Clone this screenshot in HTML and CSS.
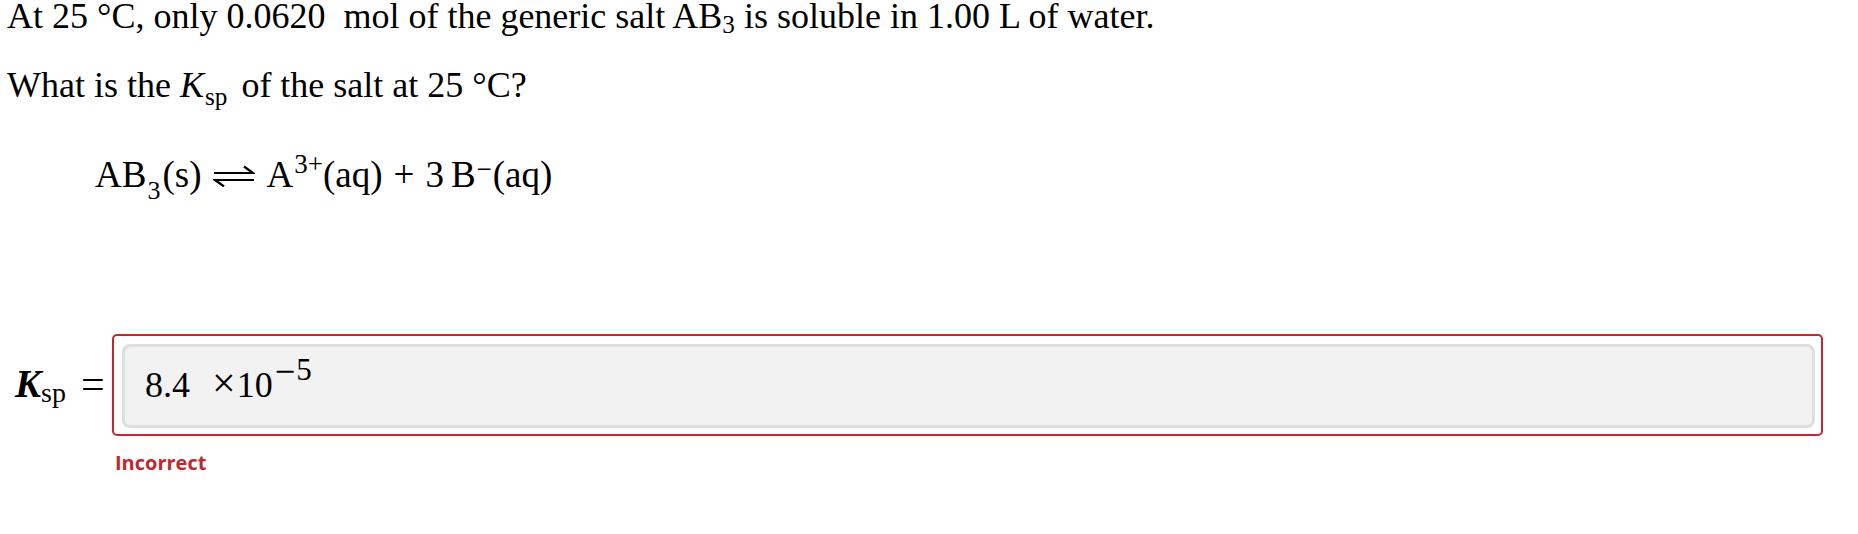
FILE: index.html
```html
<!DOCTYPE html>
<html>
<head>
<meta charset="utf-8">
<link rel="stylesheet" href="styles.css">
</head>
<body>
<div class="page">
  <p class="q q1">At 25 °C, only 0.0620&nbsp; mol of the generic salt AB<sub class="sub">3</sub> is soluble in 1.00 L of water.</p>
  <p class="q q2">What is the <i class="kvar">K</i><sub class="sub sp">sp</sub> of the salt at 25 °C?</p>
  <div class="eq"><span>AB</span><sub class="esub">3</sub><span class="paren-s">(s)</span><svg class="arrow" width="42" height="22" viewBox="0 0 42 22"><path d="M1 8 H40 L31 1.5" fill="none" stroke="#000" stroke-width="2.2"/><path d="M41 15 H2 L11 21.5" fill="none" stroke="#000" stroke-width="2.2"/></svg><span>A</span><sup class="esup">3+</sup><span>(aq)</span><span class="op">+</span><span>3</span><span class="thin"></span><span>B</span><sup class="esup minus">−</sup><span>(aq)</span></div>
  <div class="answer-row">
    <div class="label"><b class="kb">K</b><sub class="lsub">sp</sub><span class="eqsign">=</span></div>
    <div class="field-col">
      <div class="outer">
        <div class="inner">8.4<span class="times"><span class="x">×</span>10</span><sup class="exp"><span class="m">−</span>5</sup></div>
      </div>
      <div class="status">Incorrect</div>
    </div>
  </div>
</div>
</body>
</html>
```

FILE: styles.css
```css
html, body {
  margin: 0;
  padding: 0;
  background: #fff;
}
.page {
  font-family: "Liberation Serif", "Times New Roman", serif;
  font-size: 36px;
  color: #000;
  padding-left: 7px;
}
.q {
  margin: 0;
  line-height: 30px;
}
.q1 {
  padding-top: 1px;
}
.q2 {
  margin-top: 39px;
}
.sub {
  font-size: 0.7em;
  vertical-align: -0.18em;
  line-height: 0;
}
.sub.sp {
  vertical-align: -0.3em;
  margin-left: 1px;
  margin-right: 5px;
}
.kvar {
  font-style: italic;
}
.eq {
  margin-top: 60px;
  padding-left: 88px;
  line-height: 30px;
  font-size: 37px;
  white-space: nowrap;
}
.esub {
  font-size: 26px;
  vertical-align: -12px;
  line-height: 0;
  margin-left: 1px;
  margin-right: 2px;
}
.esup {
  font-size: 27px;
  vertical-align: 14px;
  line-height: 0;
  margin-left: 1px;
}
.esup.minus {
  vertical-align: 9px;
  margin-right: 1px;
}
.arrow {
  vertical-align: 0;
  margin: 0 11px 0 12px;
}
.op {
  margin: 0 11px 0 11px;
}
.thin {
  display: inline-block;
  width: 7px;
}
.answer-row {
  margin-top: 143px;
  display: flex;
  align-items: baseline;
}
.label {
  margin-left: 8px;
  width: 97px;
  flex: none;
  white-space: nowrap;
}
.kb {
  font-weight: bold;
  font-style: italic;
  font-size: 39px;
}
.lsub {
  font-size: 28px;
  vertical-align: -5px;
  line-height: 0;
}
.eqsign {
  margin-left: 15px;
  font-size: 42px;
  vertical-align: -1px;
  line-height: 0;
}
.field-col {
  flex: 1;
  margin-right: 35px;
}
.outer {
  border: 2px solid #c1272d;
  border-radius: 5px;
  padding: 8px 6px 6px 8px;
}
.inner {
  box-sizing: border-box;
  height: 84px;
  border: 3px solid #dedede;
  border-radius: 8px;
  background: #f2f2f2;
  padding: 20px 0 0 20px;
  line-height: 36px;
  white-space: nowrap;
}
.times {
  margin-left: 22px;
}
.x {
  font-size: 42px;
  line-height: 0;
  margin-right: 1px;
}
.exp {
  font-size: 31px;
  vertical-align: 17px;
  line-height: 0;
  margin-left: 1px;
}
.exp .m {
  font-family: "DejaVu Serif", serif;
  font-size: 27px;
}
.status {
  margin-top: 13px;
  margin-left: 3px;
  font-family: "Open Sans", sans-serif;
  font-weight: 700;
  font-size: 20px;
  line-height: 27px;
  color: #c1272d;
}
```
